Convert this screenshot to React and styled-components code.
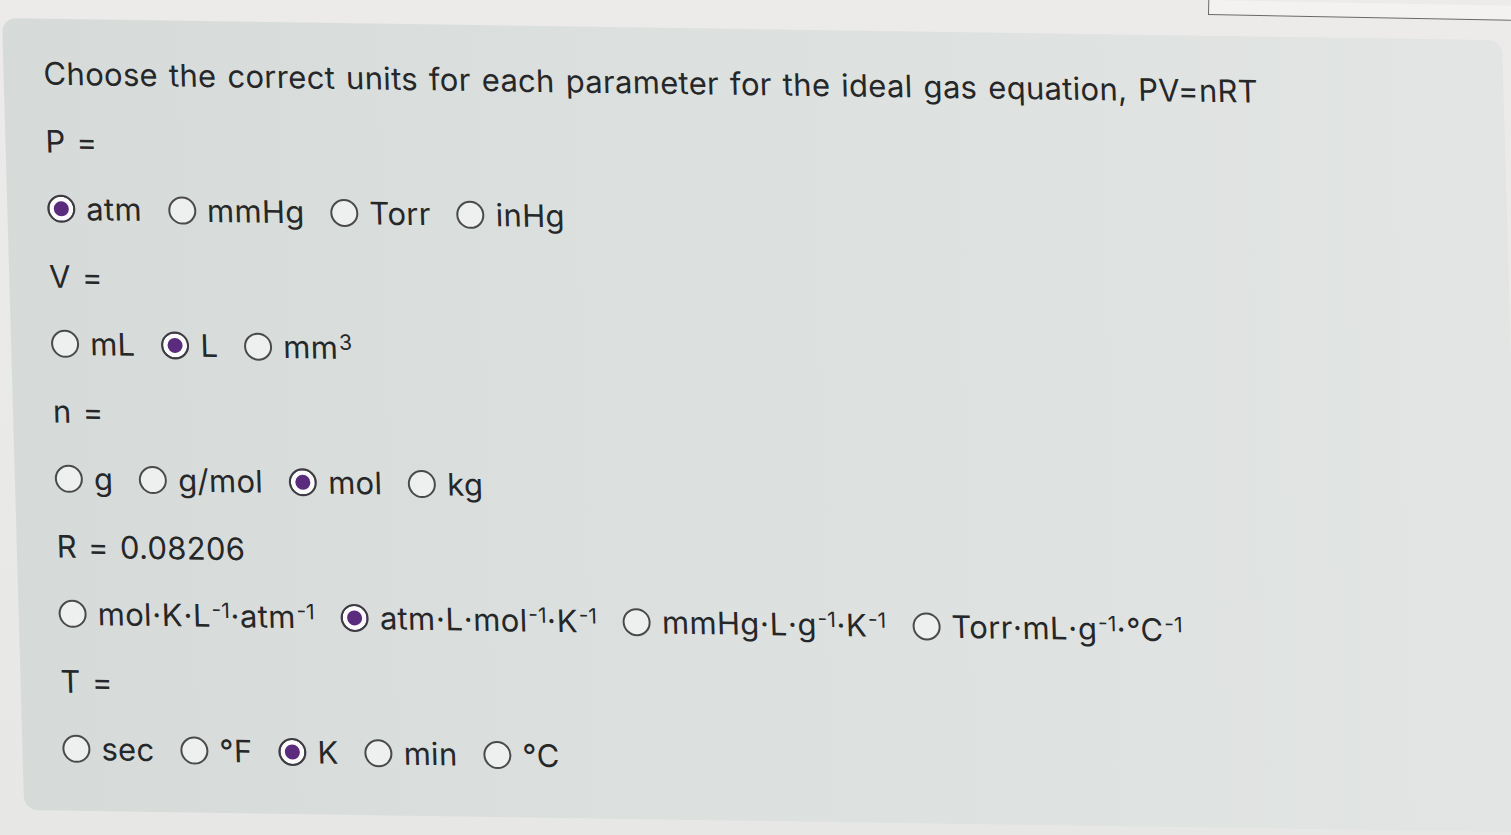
import React from 'react';
import styled, { createGlobalStyle } from 'styled-components';

const Global = createGlobalStyle`
  html, body { margin: 0; padding: 0; }
  body {
    background: #e8e8e6;
    font-family: Inter, "Liberation Sans", Arial, sans-serif;
    overflow: hidden;
  }
`;

const Page = styled.div`
  width: 1511px;
  height: 835px;
  overflow: hidden;
  display: flex;
  flex-direction: column;
  background: linear-gradient(180deg, #ecebe9 0%, #e7e8e6 100%);
`;

const TopStrip = styled.div`
  height: 18px;
  flex-shrink: 0;
  display: flex;
  justify-content: flex-end;
`;

const CornerBox = styled.div`
  width: 303px;
  height: 15px;
  box-sizing: border-box;
  background: #f3f2f0;
  border-left: 1.5px solid #6d6668;
  border-bottom: 1.5px solid #6d6668;
  transform: rotate(1.1deg);
  transform-origin: 0 100%;
`;

const Panel = styled.section`
  flex-shrink: 0;
  margin-left: 2px;
  width: 1500px;
  height: 792px;
  box-sizing: border-box;
  padding: 37px 0 0 40px;
  border-radius: 14px;
  background: linear-gradient(90deg, #d6dbda 0%, #dce0df 45%, #e2e5e4 100%);
  transform: skew(1.6deg, 0.85deg);
  transform-origin: 0 0;
  display: flex;
  flex-direction: column;
  gap: 31.5px;
  color: #262728;
  font-size: 31px;
  letter-spacing: 0.3px;
  word-spacing: 2px;
`;

const Line = styled.div`
  height: 36px;
  line-height: 36px;
  display: flex;
  align-items: center;
  white-space: nowrap;
`;

const Options = styled(Line)`
  gap: 26px;
`;

const Option = styled.label`
  display: flex;
  align-items: center;
  gap: 11px;
`;

const Radio = styled.input.attrs({ type: 'radio' })`
  appearance: none;
  margin: 0;
  width: 28px;
  height: 28px;
  flex-shrink: 0;
  box-sizing: border-box;
  border-radius: 50%;
  border: 2px solid #4a4a4c;
  background: #eef0ef;
  &:checked {
    border-color: #3d3d40;
    background: #5b2b7d;
    box-shadow: inset 0 0 0 4.5px #fbfbfb;
  }
`;

const Sup = styled.sup`
  font-size: 21px;
  line-height: 0;
  vertical-align: 9px;
  letter-spacing: 0;
  margin-left: 1px;
`;

const Dot = styled.span`
  margin: 0 0.4px;
`;

const groups = [
  {
    label: 'P =',
    name: 'p',
    options: [
      { text: 'atm', checked: true },
      { text: 'mmHg' },
      { text: 'Torr' },
      { text: 'inHg' },
    ],
  },
  {
    label: 'V =',
    name: 'v',
    options: [
      { text: 'mL' },
      { text: 'L', checked: true },
      { text: <>mm<Sup>3</Sup></> },
    ],
  },
  {
    label: 'n =',
    name: 'n',
    options: [
      { text: 'g' },
      { text: 'g/mol' },
      { text: 'mol', checked: true },
      { text: 'kg' },
    ],
  },
  {
    label: 'R = 0.08206',
    name: 'r',
    options: [
      { text: <>mol<Dot>·</Dot>K<Dot>·</Dot>L<Sup>-1</Sup><Dot>·</Dot>atm<Sup>-1</Sup></> },
      { text: <>atm<Dot>·</Dot>L<Dot>·</Dot>mol<Sup>-1</Sup><Dot>·</Dot>K<Sup>-1</Sup></>, checked: true },
      { text: <>mmHg<Dot>·</Dot>L<Dot>·</Dot>g<Sup>-1</Sup><Dot>·</Dot>K<Sup>-1</Sup></> },
      { text: <>Torr<Dot>·</Dot>mL<Dot>·</Dot>g<Sup>-1</Sup><Dot>·</Dot>°C<Sup>-1</Sup></> },
    ],
  },
  {
    label: 'T =',
    name: 't',
    options: [
      { text: 'sec' },
      { text: '°F' },
      { text: 'K', checked: true },
      { text: 'min' },
      { text: '°C' },
    ],
  },
];

export default function App() {
  return (
    <Page>
      <Global />
      <TopStrip>
        <CornerBox />
      </TopStrip>
      <Panel>
        <Line>Choose the correct units for each parameter for the ideal gas equation, PV=nRT</Line>
        {groups.map((g) => (
          <React.Fragment key={g.name}>
            <Line>{g.label}</Line>
            <Options>
              {g.options.map((o, i) => (
                <Option key={i}>
                  <Radio name={g.name} defaultChecked={!!o.checked} />
                  <span>{o.text}</span>
                </Option>
              ))}
            </Options>
          </React.Fragment>
        ))}
      </Panel>
    </Page>
  );
}
